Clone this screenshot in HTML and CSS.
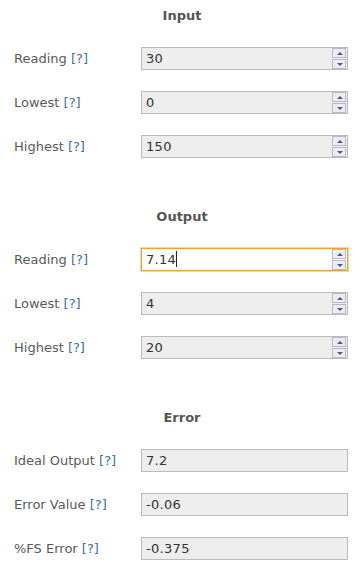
FILE: index.html
```html
<html>
<head>
<link rel="stylesheet" href="styles.css">
</head>
<body>

<div class="section">
  <h2>Input</h2>
  <div class="rows">
    <label>Reading <a class="help">[?]</a></label>
    <div class="field">30<div class="spin"><span class="up"></span><span class="down"></span></div></div>
    <label>Lowest <a class="help">[?]</a></label>
    <div class="field">0<div class="spin"><span class="up"></span><span class="down"></span></div></div>
    <label>Highest <a class="help">[?]</a></label>
    <div class="field">150<div class="spin"><span class="up"></span><span class="down"></span></div></div>
  </div>
</div>

<div class="section">
  <h2>Output</h2>
  <div class="rows">
    <label>Reading <a class="help">[?]</a></label>
    <div class="field focus">7.14<span class="caret"></span><div class="spin"><span class="up"></span><span class="down"></span></div></div>
    <label>Lowest <a class="help">[?]</a></label>
    <div class="field">4<div class="spin"><span class="up"></span><span class="down"></span></div></div>
    <label>Highest <a class="help">[?]</a></label>
    <div class="field">20<div class="spin"><span class="up"></span><span class="down"></span></div></div>
  </div>
</div>

<div class="section">
  <h2>Error</h2>
  <div class="rows">
    <label>Ideal Output <a class="help">[?]</a></label>
    <div class="field">7.2</div>
    <label>Error Value <a class="help">[?]</a></label>
    <div class="field">-0.06</div>
    <label>%FS Error <a class="help">[?]</a></label>
    <div class="field">-0.375</div>
  </div>
</div>

</body>
</html>
```

FILE: styles.css
```css
body {
  margin: 0;
  background-color: white;
  font-family: "DejaVu Sans", Verdana, sans-serif;
  font-size: 13px;
  color: #5a5a5a;
}

.section {
  padding: 8px 16px 0 14px;
  margin-bottom: 43px;
}

.section:last-child {
  margin-bottom: 0;
}

.section h2 {
  margin: 0 0 23px 0;
  font-size: 13px;
  line-height: 16px;
  font-weight: bold;
  text-align: center;
  color: #555;
  padding-left: 2px;
}

.rows {
  display: grid;
  grid-template-columns: 127px 1fr;
  grid-auto-rows: 23px;
  row-gap: 21px;
  align-items: center;
}

.rows label {
  color: #5a5a5a;
  line-height: 16px;
}

.help {
  color: #3b6fa0;
}

.field {
  position: relative;
  height: 23px;
  box-sizing: border-box;
  border: 1px solid #bbb;
  background-color: #eeeeee;
  color: #333;
  padding-left: 4px;
  line-height: 21px;
  letter-spacing: 0.3px;
}

.field.focus {
  border-color: #e2a542;
  background-color: white;
  box-shadow: 0 0 0 1px #f3d6a3;
}

.caret {
  display: inline-block;
  width: 1px;
  height: 16px;
  background-color: #222;
  vertical-align: -3px;
}

.spin {
  position: absolute;
  top: 0;
  right: 1px;
  width: 14px;
  height: 21px;
  display: flex;
  flex-direction: column;
  gap: 1px;
}

.spin span {
  flex: 1;
  position: relative;
  background-color: #ececf2;
  border: 1px solid #b9b9c8;
}

.spin span::after {
  content: "";
  position: absolute;
  left: 4px;
  top: 3px;
  border-left: 3px solid transparent;
  border-right: 3px solid transparent;
}

.spin .up::after {
  border-bottom: 3px solid #56567a;
}

.spin .down::after {
  border-top: 3px solid #56567a;
}
```
